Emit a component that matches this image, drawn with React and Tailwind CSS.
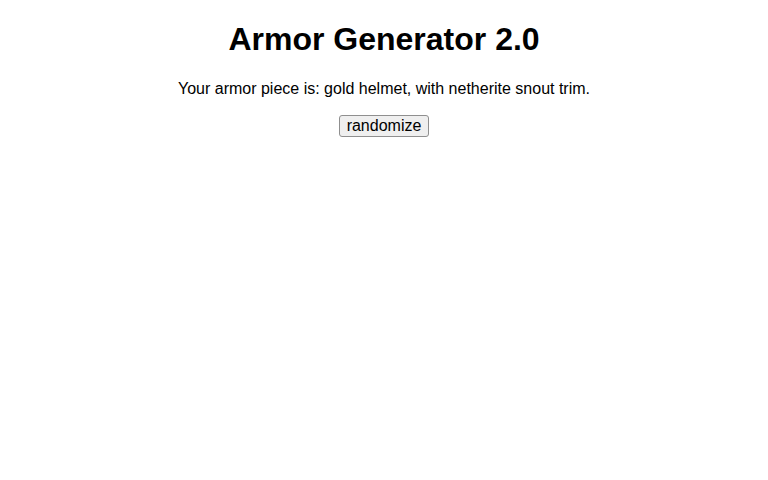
export default function App() {
  return (
    <div className="text-center text-black font-['Liberation_Sans',Arial,sans-serif] text-base">
      <h1 className="text-[32px] leading-[normal] font-bold my-[21.44px]">Armor Generator 2.0</h1>
      <p className="my-4 leading-[normal]">Your armor piece is: gold helmet, with netherite snout trim.</p>
      <button className="px-[7px] py-px leading-[normal] text-base bg-[#efefef] border border-[#8f8f8f] rounded-[3px] hover:bg-[#e5e5e5]">
        randomize
      </button>
    </div>
  );
}
